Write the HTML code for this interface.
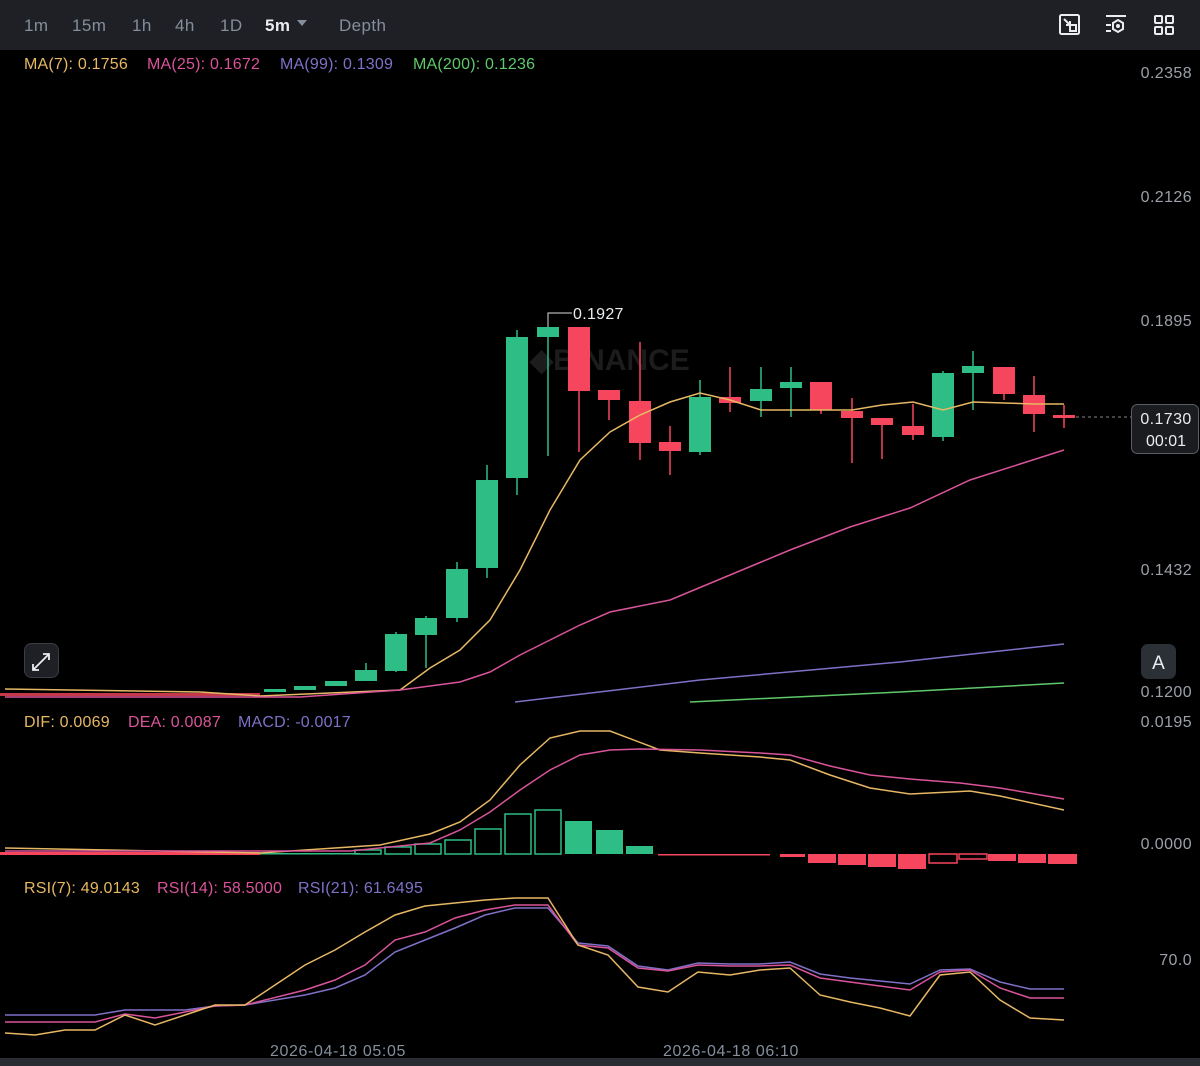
<!DOCTYPE html>
<html><head><meta charset="utf-8"><style>
body{margin:0;background:#000;width:1200px;height:1066px;overflow:hidden;font-family:"Liberation Sans",sans-serif}
svg{display:block}
</style></head><body>
<svg width="1200" height="1066" viewBox="0 0 1200 1066" xmlns="http://www.w3.org/2000/svg" font-family="Liberation Sans, sans-serif">
<rect width="1200" height="1066" fill="#000"/>
<rect width="1200" height="50" fill="#1e2026"/>
<g font-size="17" fill="#848e9c" letter-spacing=".4">
<text x="24" y="31">1m</text><text x="72" y="31">15m</text><text x="132" y="31">1h</text><text x="175" y="31">4h</text><text x="220" y="31">1D</text>
<text x="265" y="31" fill="#eaecef" font-weight="bold">5m</text>
<text x="339" y="31">Depth</text></g>
<path d="M297 20h10l-5 6z" fill="#848e9c"/>
<g stroke="#eaecef" stroke-width="2" fill="none">
<rect x="1060" y="15" width="19" height="19" rx="1.500"/><rect x="1070" y="25" width="6" height="6"/><path d="M1064 19l6 6M1070 21v4h-4"/>
<path d="M1106 16h20M1106 25h5M1106 31h5"/><path d="M1118 20l5 3v6l-5 3-5-3v-6z"/><circle cx="1118" cy="26" r="1" fill="#eaecef"/>
<rect x="1155" y="16" width="7" height="7" rx="1"/><rect x="1166" y="16" width="7" height="7" rx="1"/><rect x="1155" y="27" width="7" height="7" rx="1"/><rect x="1166" y="27" width="7" height="7" rx="1"/>
</g>
<g font-size="16" letter-spacing=".2">
<text x="24" y="69" fill="#e7b864">MA(7): 0.1756</text>
<text x="147" y="69" fill="#d9549a">MA(25): 0.1672</text>
<text x="280" y="69" fill="#8070c8">MA(99): 0.1309</text>
<text x="413" y="69" fill="#5fc96a">MA(200): 0.1236</text>
</g>
<g font-size="16" fill="#9ba0a8" text-anchor="end" letter-spacing=".4">
<text x="1192" y="78">0.2358</text><text x="1192" y="202">0.2126</text><text x="1192" y="326">0.1895</text><text x="1192" y="575">0.1432</text><text x="1192" y="697">0.1200</text>
<text x="1192" y="727">0.0195</text><text x="1192" y="849">0.0000</text><text x="1192" y="965">70.0</text>
</g>
<text x="530" y="370" font-size="30" font-weight="bold" fill="#1c1c1c">◆BINANCE</text>
<g fill="#f6465d"><rect x="0" y="693" width="260" height="3" opacity=".8"/></g>
<g fill="#2ebd85">
<rect x="264" y="689" width="22" height="3"/><rect x="294" y="686" width="22" height="4"/><rect x="325" y="681" width="22" height="5"/><rect x="355" y="670" width="22" height="11"/>
<rect x="385" y="634" width="22" height="37"/><rect x="415" y="618" width="22" height="17"/><rect x="446" y="569" width="22" height="49"/><rect x="476" y="480" width="22" height="88"/>
<rect x="506" y="337" width="22" height="141"/><rect x="537" y="327" width="22" height="10"/><rect x="689" y="397" width="22" height="55"/><rect x="750" y="389" width="22" height="12"/>
<rect x="780" y="382" width="22" height="6"/><rect x="932" y="373" width="22" height="64"/><rect x="962" y="366" width="22" height="7"/>
</g>
<g stroke="#2ebd85" stroke-width="1.5">
<path d="M366 663v8M396 632v40M426 616v52M457 562v60M487 465v113M517 330v165M548 327v129M700 380v75M761 367v50M791 367v50M943 371v70M973 351v59"/>
</g>
<g fill="#f6465d">
<rect x="568" y="327" width="22" height="64"/><rect x="598" y="390" width="22" height="10"/><rect x="629" y="401" width="22" height="42"/><rect x="659" y="442" width="22" height="9"/>
<rect x="719" y="397" width="22" height="6"/><rect x="810" y="382" width="22" height="28"/><rect x="841" y="411" width="22" height="7"/><rect x="871" y="418" width="22" height="7"/>
<rect x="902" y="426" width="22" height="9"/><rect x="993" y="367" width="22" height="27"/><rect x="1023" y="395" width="22" height="19"/><rect x="1053" y="415" width="22" height="3"/>
</g>
<g stroke="#f6465d" stroke-width="1.5">
<path d="M579 391v61M609 400v20M640 342v118M670 426v49M730 367v45M821 410v4M852 398v65M882 418v41M913 404v36M1004 394v6M1034 376v56M1064 405v23"/>
</g>
<path d="M548 327v-14h24" stroke="#ddd" fill="none" stroke-width="1"/>
<text x="573" y="319" font-size="16" fill="#eaecef" letter-spacing=".3">0.1927</text>
<path d="M1076 417h56" stroke="#888" stroke-dasharray="3 3"/>
<rect x="1131.500" y="404.500" width="67" height="49" rx="6" fill="#1a1c20" stroke="#5a5e66"/>
<text x="1166" y="424" font-size="16" fill="#eaecef" text-anchor="middle" letter-spacing=".4">0.1730</text>
<text x="1166" y="446" font-size="16" fill="#eaecef" text-anchor="middle">00:01</text>
<g fill="none" stroke-width="1.5">
<polyline stroke="#e7b864" points="5,689 200,692 260,696 400,690 430,668 460,650 490,620 520,570 550,510 580,460 610,432 640,415 670,402 700,393 730,400 761,410 791,410 821,410 852,410 882,405 913,402 943,410 973,402 1004,403 1034,404 1064,404"/>
<polyline stroke="#d9549a" points="5,697 300,697 400,690 460,682 490,672 520,655 550,640 580,625 610,612 670,600 730,575 790,550 850,527 910,508 970,480 1064,450"/>
<polyline stroke="#8070c8" points="515,702 700,680 900,662 1064,644"/>
<polyline stroke="#5fc96a" points="690,702 900,692 1064,683"/>
</g>
<rect x="24.500" y="643.500" width="34" height="34" rx="7" fill="#1e2026" stroke="#3a3d44"/>
<path d="M33 670l16-16M43 654h6v6M33 664v6h6" stroke="#eaecef" stroke-width="1.8" fill="none"/>
<rect x="1141" y="644" width="35" height="35" rx="7" fill="#2b2f36"/>
<text x="1158.500" y="669" font-size="19" fill="#eaecef" text-anchor="middle">A</text>
<g font-size="16" letter-spacing=".2">
<text x="24" y="727" fill="#e7b864">DIF: 0.0069</text>
<text x="128" y="727" fill="#d9549a">DEA: 0.0087</text>
<text x="238" y="727" fill="#8070c8">MACD: -0.0017</text>
</g>
<g fill="none" stroke="#2ebd85" stroke-width="1.5">
<rect x="355" y="850" width="26" height="4"/><rect x="385" y="847" width="26" height="7"/><rect x="415" y="844" width="26" height="10"/><rect x="445" y="840" width="26" height="14"/><rect x="475" y="829" width="26" height="25"/><rect x="505" y="814" width="26" height="40"/><rect x="535" y="810" width="26" height="44"/>
</g>
<g fill="#2ebd85"><rect x="565" y="821" width="27" height="33"/><rect x="596" y="830" width="27" height="24"/><rect x="626" y="846" width="27" height="8"/><path d="M260 853h100v1.500h-100z"/></g>
<g fill="#f6465d">
<rect x="0" y="852" width="260" height="3"/>
<rect x="658" y="854" width="112" height="1.500"/>
<rect x="780" y="854" width="25" height="3"/><rect x="808" y="854" width="28" height="9"/><rect x="838" y="854" width="28" height="11"/><rect x="868" y="854" width="28" height="13"/><rect x="898" y="854" width="28" height="15"/>
<rect x="988" y="854" width="28" height="7"/><rect x="1018" y="854" width="28" height="9"/><rect x="1048" y="854" width="29" height="10"/>
</g>
<g fill="none" stroke="#f6465d" stroke-width="1.5"><rect x="929" y="854" width="28" height="9"/><rect x="959" y="854" width="28" height="5"/></g>
<g fill="none" stroke-width="1.5">
<polyline stroke="#e7b864" points="5,848 260,853 380,845 430,834 460,822 490,800 520,765 550,738 580,731 610,731 660,750 700,753 760,757 790,760 830,775 870,788 910,794 950,792 970,791 1000,796 1064,810"/>
<polyline stroke="#d9549a" points="5,851 350,851 430,843 460,830 490,812 520,790 550,770 580,755 610,750 640,749 700,750 760,753 790,755 830,766 870,775 910,779 960,783 1000,788 1064,799"/>
</g>
<g font-size="16" letter-spacing=".2">
<text x="24" y="893" fill="#e7b864">RSI(7): 49.0143</text>
<text x="157" y="893" fill="#d9549a">RSI(14): 58.5000</text>
<text x="298" y="893" fill="#8070c8">RSI(21): 61.6495</text>
</g>
<g fill="none" stroke-width="1.5">
<polyline stroke="#8070c8" points="5,1015 95,1015 125,1010 185,1010 215,1006 245,1005 305,995 335,988 365,975 395,952 425,940 455,928 485,915 515,908 548,908 578,943 608,946 638,966 668,970 698,963 730,964 760,964 790,962 820,974 850,978 880,981 910,984 940,970 970,969 1000,982 1030,989 1064,989"/>
<polyline stroke="#d9549a" points="5,1022 95,1022 125,1014 155,1018 185,1012 215,1006 245,1005 305,990 335,980 365,965 395,940 425,932 455,918 485,910 515,905 548,905 578,945 608,948 638,968 668,971 698,965 730,966 760,966 790,965 820,978 850,982 880,986 910,990 940,972 970,970 1000,988 1030,998 1064,998"/>
<polyline stroke="#e7b864" points="5,1033 35,1035 65,1030 95,1030 125,1015 155,1025 185,1015 215,1005 245,1005 275,985 305,965 335,950 365,932 395,915 425,906 455,903 485,900 515,898 548,898 578,945 608,955 638,987 668,992 698,972 730,975 760,970 790,968 820,995 850,1002 880,1008 910,1016 940,975 970,972 1000,1000 1030,1018 1064,1020"/>
</g>
<g font-size="16" fill="#848e9c" text-anchor="middle" letter-spacing=".6"><text x="338" y="1056">2026-04-18 05:05</text><text x="731" y="1056">2026-04-18 06:10</text></g>
<rect x="0" y="1058" width="1200" height="8" fill="#2a2d33"/>
</svg>
</body></html>
